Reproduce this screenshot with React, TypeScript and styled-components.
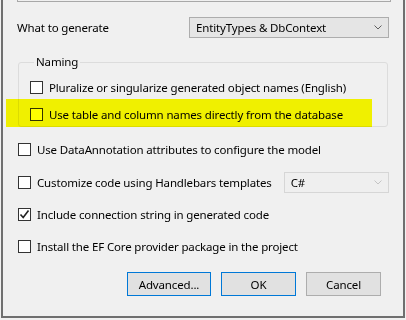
import React from 'react'
import styled, { createGlobalStyle } from 'styled-components'

const GlobalStyle = createGlobalStyle`
  html, body {
    margin: 0;
    padding: 0;
    background: #f0f0f0;
  }
  body {
    font-family: "Noto Sans", "Open Sans", sans-serif;
    font-size: 11.5px;
    letter-spacing: -0.15px;
    color: #000;
    width: 406px;
    height: 320px;
    overflow: hidden;
  }
`

const Window = styled.div`
  position: relative;
  box-sizing: border-box;
  margin-left: 1px;
  width: 404px;
  height: 318px;
  border: 2px solid #6f6f6f;
  border-top: none;
  padding: 0 22px 0 14px;
  background: #f0f0f0;
`

const TopStub = styled.div`
  width: 372px;
  height: 1px;
  box-sizing: content-box;
  border: 1px solid #a8a8a8;
  border-top: none;
`

const GenerateRow = styled.div`
  display: flex;
  align-items: center;
  justify-content: space-between;
  width: 372px;
  height: 21px;
  margin-top: 15px;
`

const Label = styled.span`
  line-height: 16px;
  white-space: nowrap;
`

const Combo = styled.div<{ $disabled?: boolean; $width: number; $offset?: number }>`
  box-sizing: border-box;
  display: flex;
  align-items: center;
  justify-content: space-between;
  flex: none;
  width: ${p => p.$width}px;
  height: 21px;
  margin-left: ${p => p.$offset ?? 0}px;
  padding: 0 6px 0 6px;
  border: 1px solid ${p => (p.$disabled ? '#d6d6d6' : '#adadad')};
  background: ${p => (p.$disabled ? '#efefef' : '#e5e5e5')};
  color: #000;
  svg {
    stroke: ${p => (p.$disabled ? '#c4c4c4' : '#606060')};
  }
`

const GroupBox = styled.fieldset`
  box-sizing: border-box;
  width: 370px;
  margin: 16px 0 0 1px;
  padding: 7px 0 2px 10px;
  border: 1px solid #dcdcdc;
  border-radius: 3px;
  min-width: 0;
`

const Legend = styled.legend`
  margin-left: 5px;
  padding: 0 2px;
  line-height: 16px;
`

const Row = styled.label<{ $gap: number }>`
  display: flex;
  align-items: center;
  gap: 6px;
  height: 20px;
  margin-top: ${p => p.$gap}px;
  margin-left: 1px;
  white-space: nowrap;
`

const Box = styled.span`
  box-sizing: border-box;
  display: inline-flex;
  align-items: center;
  justify-content: center;
  flex: none;
  width: 13px;
  height: 13px;
  border: 1px solid #333;
  background: #fff;
`

const Buttons = styled.div`
  display: flex;
  justify-content: flex-end;
  gap: 10px;
  margin-top: 16px;
`

const Button = styled.button<{ $focus?: boolean; $width: number }>`
  box-sizing: border-box;
  width: ${p => p.$width}px;
  height: 24px;
  padding: 0;
  font: inherit;
  letter-spacing: inherit;
  color: #000;
  background: #e1e1e1;
  border: 1px solid ${p => (p.$focus ? '#0078d7' : '#adadad')};
`

const Highlight = styled.div`
  position: absolute;
  left: 3px;
  top: 99px;
  width: 366px;
  height: 28px;
  background: #ffff00;
  mix-blend-mode: multiply;
  pointer-events: none;
`

const Chevron = () => (
  <svg width="8" height="5" viewBox="0 0 8 5" fill="none" strokeWidth="1">
    <path d="M0.5 0.5 L4 4 L7.5 0.5" />
  </svg>
)

const Check = () => (
  <svg width="11" height="11" viewBox="0 0 11 11" fill="none">
    <path d="M1.5 5.5 L4.2 8.5 L9.5 1.5" stroke="#222" strokeWidth="1.6" />
  </svg>
)

const Checkbox = ({ checked }: { checked?: boolean }) => <Box>{checked && <Check />}</Box>

export default function App() {
  return (
    <>
      <GlobalStyle />
      <Window>
        <TopStub />
        <GenerateRow>
          <Label>What to generate</Label>
          <Combo $width={200}>
            <span>EntityTypes &amp; DbContext</span>
            <Chevron />
          </Combo>
        </GenerateRow>

        <GroupBox>
          <Legend>Naming</Legend>
          <Row $gap={0}>
            <Checkbox />
            <span>Pluralize or singularize generated object names (English)</span>
          </Row>
          <Row $gap={7}>
            <Checkbox />
            <span>Use table and column names directly from the database</span>
          </Row>
        </GroupBox>

        <Row $gap={12}>
          <Checkbox />
          <span>Use DataAnnotation attributes to configure the model</span>
        </Row>
        <Row $gap={13}>
          <Checkbox />
          <span>Customize code using Handlebars templates</span>
          <Combo $width={105} $offset={6} $disabled>
            <span>C#</span>
            <Chevron />
          </Combo>
        </Row>
        <Row $gap={12}>
          <Checkbox checked />
          <span>Include connection string in generated code</span>
        </Row>
        <Row $gap={12}>
          <Checkbox />
          <span>Install the EF Core provider package in the project</span>
        </Row>

        <Buttons>
          <Button $focus $width={84}>Advanced...</Button>
          <Button $focus $width={75}>OK</Button>
          <Button $width={75}>Cancel</Button>
        </Buttons>

        <Highlight />
      </Window>
    </>
  )
}
